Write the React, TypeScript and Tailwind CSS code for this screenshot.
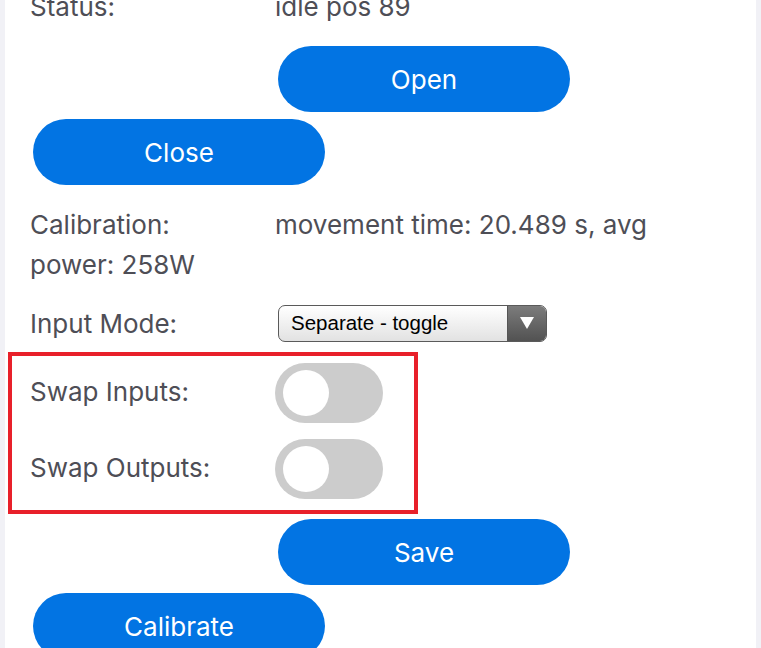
import React from "react";

const font = { fontFamily: "Inter, 'Liberation Sans', sans-serif" };

function Btn({ label, className = "" }: { label: string; className?: string }) {
  return (
    <button
      className={`w-[292px] h-[66px] rounded-full bg-[#0274e3] text-white text-[26px] flex items-center justify-center shrink-0 ${className}`}
    >
      {label}
    </button>
  );
}

function Toggle() {
  return (
    <div className="w-[108px] h-[60px] rounded-full bg-[#cccccc] flex items-center pl-[8px] shrink-0">
      <div className="w-[46px] h-[46px] rounded-full bg-white" />
    </div>
  );
}

export default function App() {
  return (
    <div className="w-[761px] h-[648px] overflow-hidden bg-[#f1f1f6] flex" style={font}>
      <div className="ml-[5px] w-[751px] h-full bg-white flex flex-col pl-[25px] text-[26px] text-[#4e4e56]">
        <div className="h-[40px] -mt-[14px] flex items-center shrink-0">
          <span className="w-[245px]">Status:</span>
          <span>idle pos 89</span>
        </div>
        <Btn label="Open" className="mt-[20px] ml-[248px]" />
        <Btn label="Close" className="mt-[7px] ml-[3px]" />
        <div className="mt-[20px] leading-[40px] shrink-0">
          <span className="inline-block w-[245px]">Calibration:</span>
          <span>movement time: 20.489 s, avg</span>
          <br />
          <span>power: 258W</span>
        </div>
        <div className="mt-[18px] h-[40px] flex items-center shrink-0">
          <span className="w-[248px]">Input Mode:</span>
          <div
            className="w-[269px] h-[37px] rounded-[7px] border border-[#5a5a5a] flex overflow-hidden bg-gradient-to-b from-white to-[#e2e2e2]"
            style={{ fontFamily: "'Liberation Sans', Arial, sans-serif" }}
          >
            <div className="flex-1 flex items-center pl-[12px] text-[20.5px] text-black">Separate - toggle</div>
            <div className="w-[39px] border-l border-[#555] bg-gradient-to-b from-[#7c7c7c] to-[#525252] flex items-center justify-center">
              <svg width="14" height="12" viewBox="0 0 14 12">
                <path d="M0 0 H14 L7 12 Z" fill="white" />
              </svg>
            </div>
          </div>
        </div>
        <div className="mt-[9px] -ml-[22px] w-[410px] border-4 border-[#e8202a] pl-[18px] pt-[7px] pb-[11px] flex flex-col gap-[16px] shrink-0">
          <div className="h-[60px] flex items-center">
            <span className="w-[245px] -mt-[3px]">Swap Inputs:</span>
            <Toggle />
          </div>
          <div className="h-[60px] flex items-center">
            <span className="w-[245px] -mt-[3px]">Swap Outputs:</span>
            <Toggle />
          </div>
        </div>
        <Btn label="Save" className="mt-[5px] ml-[248px]" />
        <Btn label="Calibrate" className="mt-[8px] ml-[3px]" />
      </div>
    </div>
  );
}
